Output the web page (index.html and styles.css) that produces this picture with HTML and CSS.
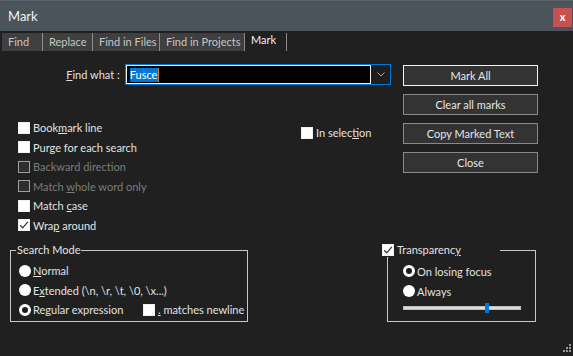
FILE: index.html
```html
<!doctype html>
<html>
<head>
    <title>Mark</title>
    <link rel="stylesheet" href="styles.css">
</head>

<body>
    <div class="window">
        <div class="titlebar">
            <span class="title">Mark</span>
            <span class="close">x</span>
        </div>

        <div class="tabs">
            <span class="tab tab-find">Find</span>
            <span class="tab tab-replace">Replace</span>
            <span class="tab tab-files">Find in Files</span>
            <span class="tab tab-projects">Find in Projects</span>
            <span class="tab tab-mark active">Mark</span>
        </div>

        <div class="body">
            <div class="top">
                <div class="left">
                    <!-- search field -->
                    <div class="find-row">
                        <label class="find-label"><u>F</u>ind what :</label>
                        <div class="combo">
                            <div class="edit"><span class="sel">Fusce</span><span class="caret"></span></div>
                            <div class="drop">
                                <svg width="8" height="5" viewBox="0 0 8 5"><path d="M0.5 0.5 L4 4 L7.5 0.5" fill="none" stroke="#a8a8a8" stroke-width="1"/></svg>
                            </div>
                        </div>
                    </div>

                    <!-- options -->
                    <div class="options">
                        <div class="checks">
                            <div class="cb"><span class="box"></span><span>Book<u>m</u>ark line</span></div>
                            <div class="cb"><span class="box"></span><span>Purge for each search</span></div>
                            <div class="cb disabled"><span class="box"></span><span>Backward direction</span></div>
                            <div class="cb disabled"><span class="box"></span><span>Match <u>w</u>hole word only</span></div>
                            <div class="cb"><span class="box"></span><span>Match <u>c</u>ase</span></div>
                            <div class="cb"><span class="box checked"><svg width="12" height="12" viewBox="0 0 12 12"><path d="M2.2 6.2 L4.8 8.8 L9.8 2.8" fill="none" stroke="#3a3a3a" stroke-width="1.3"/></svg></span><span>Wra<u>p</u> around</span></div>
                        </div>
                        <div class="insel">
                            <div class="cb"><span class="box"></span><span>In selec<u>t</u>ion</span></div>
                        </div>
                    </div>
                </div>

                <div class="buttons">
                    <div class="btn default">Mark All</div>
                    <div class="btn">Clear all marks</div>
                    <div class="btn">Copy Marked Text</div>
                    <div class="btn">Close</div>
                </div>
            </div>

            <div class="bottom">
                <fieldset class="group search">
                    <legend>Search Mode</legend>
                    <div class="rows">
                        <div class="rb"><span class="radio"></span><span><u>N</u>ormal</span></div>
                        <div class="rb"><span class="radio"></span><span>E<u>x</u>tended (\n, \r, \t, \0, \x...)</span></div>
                        <div class="rb-line">
                            <div class="rb rx"><span class="radio on"></span><span>Re<u>g</u>ular expression</span></div>
                            <div class="cb"><span class="box"></span><span><u>.</u> matches newline</span></div>
                        </div>
                    </div>
                </fieldset>

                <fieldset class="group trans">
                    <legend>
                        <span class="cb"><span class="box checked"><svg width="12" height="12" viewBox="0 0 12 12"><path d="M2.2 6.2 L4.8 8.8 L9.8 2.8" fill="none" stroke="#3a3a3a" stroke-width="1.3"/></svg></span><span>Transparenc<u>y</u></span></span>
                    </legend>
                    <div class="trows">
                        <div class="rb"><span class="radio on"></span><span>On losing focus</span></div>
                        <div class="rb"><span class="radio"></span><span>Always</span></div>
                        <div class="slider-row">
                            <div class="slider"><span class="thumb"></span></div>
                        </div>
                    </div>
                </fieldset>
            </div>

            <div class="grip">
                <svg width="11" height="11" viewBox="0 0 11 11" fill="#9a9a9a">
                    <rect x="8" y="0" width="2" height="2"/>
                    <rect x="5" y="3" width="2" height="2"/>
                    <rect x="8" y="3" width="2" height="2"/>
                    <rect x="2" y="6" width="2" height="2"/>
                    <rect x="5" y="6" width="2" height="2"/>
                    <rect x="8" y="6" width="2" height="2"/>
                </svg>
            </div>
        </div>
    </div>
</body>

</html>
```

FILE: styles.css
```css
html, body {
    margin: 0;
    background-color: #202020;
    font-family: Lato, "Liberation Sans", sans-serif;
    font-size: 11px;
    color: #e2e2e2;
}

u {
    text-decoration: underline;
    text-underline-offset: 1px;
}

.window {
    width: 573px;
    height: 356px;
    display: flex;
    flex-direction: column;
    overflow: hidden;
}

/* title bar */
.titlebar {
    height: 30px;
    border-top: 1px solid #5c636a;
    background-color: #4b535b;
    display: flex;
    align-items: flex-start;
    padding-left: 8px;
}

.title {
    flex: 1;
    font-size: 13px;
    line-height: 30px;
    color: #f2f2f2;
}

.close {
    width: 19px;
    height: 19px;
    margin-top: 7px;
    margin-right: 1px;
    background-color: #c75050;
    color: white;
    font-weight: bold;
    font-size: 11px;
    line-height: 17px;
    text-align: center;
}

/* tabs */
.tabs {
    height: 21px;
    display: flex;
    align-items: flex-start;
    padding: 2px 0 0 2px;
    box-sizing: border-box;
}

.tab {
    height: 18px;
    box-sizing: border-box;
    padding-left: 6px;
    line-height: 18px;
    background-color: #3f3f3f;
    border-right: 1px solid #8c8c8c;
    color: #c6c6c6;
    white-space: nowrap;
}

.tab-find { width: 41px; }
.tab-replace { width: 50px; }
.tab-files { width: 67px; }
.tab-projects { width: 85px; }
.tab-mark { width: 42px; }

.tab.active {
    background-color: transparent;
    color: #f0f0f0;
    line-height: 14px;
}

/* dialog body */
.body {
    flex: 1;
    position: relative;
}

.top {
    display: flex;
    padding-top: 12px;
}

.left {
    width: 391px;
}

.find-row {
    display: flex;
    align-items: center;
    height: 21px;
}

.find-label {
    width: 125px;
    padding-right: 5px;
    box-sizing: border-box;
    text-align: right;
}

.combo {
    width: 267px;
    height: 21px;
    box-sizing: border-box;
    border: 1px solid #0078d7;
    display: flex;
}

.edit {
    flex: 1;
    background-color: black;
    border: 1px solid #f0f0f0;
    display: flex;
    align-items: center;
    padding-left: 3px;
}

.sel {
    background-color: #0078d7;
    color: white;
    line-height: 14px;
    padding-right: 1px;
}

.caret {
    width: 1px;
    height: 14px;
    background-color: #d08030;
}

.drop {
    width: 19px;
    display: flex;
    align-items: center;
    justify-content: center;
    background-color: #1e1e1e;
}

.buttons {
    margin-left: 12px;
    width: 135px;
    display: flex;
    flex-direction: column;
    gap: 8px;
    padding-top: 1px;
}

.btn {
    height: 21px;
    box-sizing: border-box;
    border: 1px solid #8a8a8a;
    background-color: #333333;
    color: #e6e6e6;
    text-align: center;
    line-height: 19px;
}

.btn.default {
    border-color: #f4f4f4;
}

/* check boxes */
.options {
    display: flex;
    margin-top: 33px;
    padding-left: 18px;
}

.checks {
    width: 283px;
    display: grid;
    grid-auto-rows: 19.5px;
}

.insel {
    padding-top: 5px;
}

.insel .cb {
    height: 19.5px;
}

.cb {
    display: flex;
    align-items: center;
    gap: 3px;
    white-space: nowrap;
}

.box {
    width: 12px;
    height: 12px;
    box-sizing: border-box;
    background-color: white;
    border: 1px solid #f0f0f0;
    flex: none;
    display: flex;
}

.box svg {
    margin: -1px;
}

.cb.disabled {
    color: #7c7c7c;
}

.cb.disabled .box {
    background-color: #2e2e2e;
    border-color: #a0a0a0;
}

/* group boxes */
.bottom {
    display: flex;
    padding-left: 10px;
    margin-top: 8px;
}

.group {
    margin: 0;
    padding: 0;
    border: 1px solid #c8c8c8;
    min-inline-size: 0;
    box-sizing: border-box;
}

.group legend {
    line-height: 14px;
    padding: 0 1px;
    margin-left: 5px;
}

.search {
    width: 238px;
}

.rows {
    padding: 4px 0 0 8px;
    display: grid;
    grid-auto-rows: 19.5px;
}

.rb, .rb-line {
    display: flex;
    align-items: center;
    gap: 2px;
    white-space: nowrap;
}

.rb.rx {
    width: 122px;
}

.radio {
    width: 12px;
    height: 12px;
    box-sizing: border-box;
    border-radius: 50%;
    background-color: white;
    flex: none;
}

.radio.on {
    background-color: #1c1c1c;
    border: 3px solid white;
}

.trans {
    width: 149px;
    margin-left: auto;
    margin-right: 37px;
}

.trans legend {
    width: 118px;
    padding: 0;
    margin-left: -6px;
}

.trows {
    padding: 4px 0 0 15px;
    display: grid;
    grid-auto-rows: 20px;
}

.slider-row {
    height: 14px;
    display: flex;
    align-items: center;
}

.slider {
    position: relative;
    width: 118px;
    height: 4px;
    box-sizing: border-box;
    background-color: #dcdcdc;
    border: 1px solid #bdbdbd;
}

.thumb {
    position: absolute;
    left: 81px;
    top: -4px;
    width: 4px;
    height: 10px;
    background-color: #0078d7;
}

.grip {
    position: absolute;
    right: 1px;
    bottom: 1px;
    line-height: 0;
}
```
